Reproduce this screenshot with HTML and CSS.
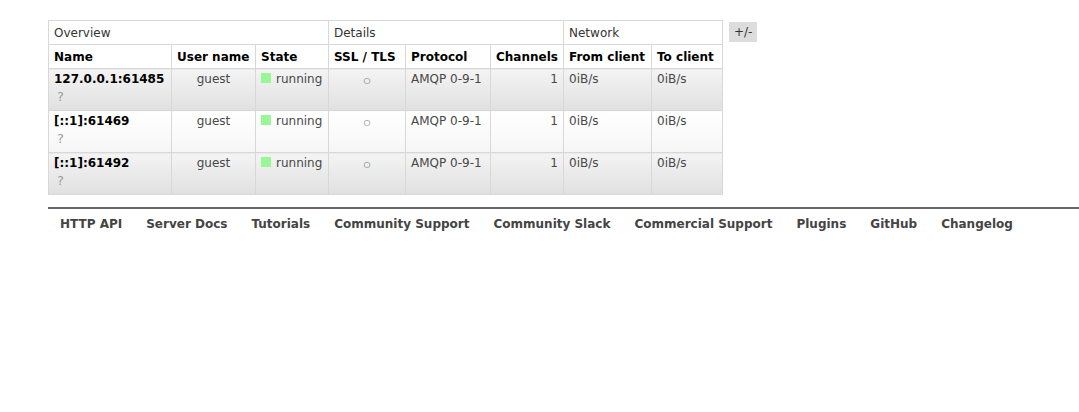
FILE: index.html
```html
<!DOCTYPE html>
<html lang="en">

<head>
    <meta charset="UTF-8">
    <title>Connections | RabbitMQ Management</title>
    <link rel="stylesheet" href="styles.css">
</head>

<body>
    <div class="main">
        <!-- Connections table -->
        <div class="table-wrap">
            <table class="list">
                <thead>
                    <tr class="group">
                        <th colspan="3">Overview</th>
                        <th colspan="3">Details</th>
                        <th colspan="2">Network</th>
                    </tr>
                    <tr>
                        <th class="c-name">Name</th>
                        <th class="c-user">User name</th>
                        <th class="c-state">State</th>
                        <th class="c-ssl">SSL / TLS</th>
                        <th class="c-proto">Protocol</th>
                        <th class="c-chan">Channels</th>
                        <th class="c-from">From client</th>
                        <th class="c-to">To client</th>
                    </tr>
                </thead>
                <tbody>
                    <tr class="alt1">
                        <td><span class="conn">127.0.0.1:61485</span><span class="help">?</span></td>
                        <td class="c">guest</td>
                        <td><span class="state-dot"></span>running</td>
                        <td class="c"><span class="ssl">○</span></td>
                        <td>AMQP 0-9-1</td>
                        <td class="r">1</td>
                        <td>0iB/s</td>
                        <td>0iB/s</td>
                    </tr>
                    <tr class="alt2">
                        <td><span class="conn">[::1]:61469</span><span class="help">?</span></td>
                        <td class="c">guest</td>
                        <td><span class="state-dot"></span>running</td>
                        <td class="c"><span class="ssl">○</span></td>
                        <td>AMQP 0-9-1</td>
                        <td class="r">1</td>
                        <td>0iB/s</td>
                        <td>0iB/s</td>
                    </tr>
                    <tr class="alt1">
                        <td><span class="conn">[::1]:61492</span><span class="help">?</span></td>
                        <td class="c">guest</td>
                        <td><span class="state-dot"></span>running</td>
                        <td class="c"><span class="ssl">○</span></td>
                        <td>AMQP 0-9-1</td>
                        <td class="r">1</td>
                        <td>0iB/s</td>
                        <td>0iB/s</td>
                    </tr>
                </tbody>
            </table>
            <span class="toggle">+/-</span>
        </div>
    </div>

    <!-- Footer -->
    <div class="footer">
        <ul>
            <li><a href="#">HTTP API</a></li>
            <li><a href="#">Server Docs</a></li>
            <li><a href="#">Tutorials</a></li>
            <li><a href="#">Community Support</a></li>
            <li><a href="#">Community Slack</a></li>
            <li><a href="#">Commercial Support</a></li>
            <li><a href="#">Plugins</a></li>
            <li><a href="#">GitHub</a></li>
            <li><a href="#">Changelog</a></li>
        </ul>
    </div>
</body>

</html>
```

FILE: styles.css
```css
body {
    font-family: "DejaVu Sans", Verdana, sans-serif;
    font-size: 12px;
    color: #484848;
    margin: 0;
    padding: 0;
    background-color: #fff;
}

.main {
    padding: 20px 0 0 48px;
}

.table-wrap {
    display: flex;
    align-items: flex-start;
    gap: 6px;
}

/* Connections table */
table.list {
    border-collapse: collapse;
}

table.list th,
table.list td {
    border: 1px solid #d8d8d8;
    padding: 5px 5px 3px;
    vertical-align: top;
    text-align: left;
    line-height: 15px;
}

table.list th {
    font-weight: bold;
    color: #000;
    white-space: nowrap;
    height: 15px;
}

table.list tr.group th {
    font-weight: normal;
    color: #333;
}

table.list td {
    padding: 2px 5px;
    height: 37px;
    line-height: 17px;
    white-space: nowrap;
}

table.list .c {
    text-align: center;
}

table.list .r {
    text-align: right;
}

tr.alt1 td {
    background: linear-gradient(#f4f4f4, #e0e0e0);
}

tr.alt2 td {
    background: linear-gradient(#fff, #f6f6f6);
}

.c-name { width: 112px; }
.c-user { width: 73px; }
.c-state { width: 62px; }
.c-ssl { width: 66px; }
.c-proto { width: 74px; }
.c-chan { width: 62px; }
.c-from { width: 77px; }
.c-to { width: 60px; }

.conn {
    display: block;
    font-weight: bold;
    color: #000;
}

.help {
    display: block;
    color: #a09c98;
    font-size: 13px;
    padding-left: 3px;
}

.ssl {
    font-size: 8px;
    color: #555;
}

.state-dot {
    display: inline-block;
    width: 10px;
    height: 10px;
    margin-right: 5px;
    background-color: #98f898;
}

.toggle {
    margin-top: 2px;
    padding: 3px 5px;
    background-color: #ddd;
    color: #333;
}

/* Footer */
.footer {
    margin: 12px 0 0 48px;
    border-top: 2px solid #666;
}

.footer ul {
    list-style: none;
    margin: 0;
    padding: 8px 12px 6px;
    display: flex;
    gap: 24px;
}

.footer a {
    color: #444;
    font-weight: bold;
    text-decoration: none;
    font-size: 12px;
}

.footer a:hover {
    text-decoration: underline;
}
```
